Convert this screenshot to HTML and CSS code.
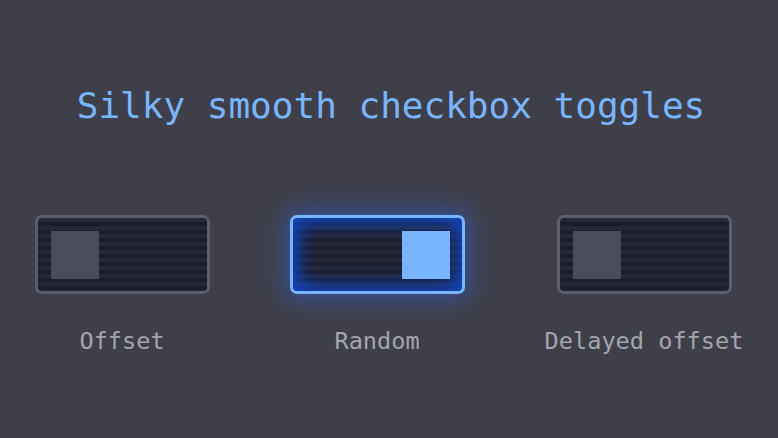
FILE: index.html
```html
<!DOCTYPE html>
<html lang="en">
<head>
  <meta charset="UTF-8" />
  <meta name="viewport" content="width=device-width, initial-scale=1.0" />
  <title>Silky smooth checkbox toggles</title>
  <link rel="stylesheet" href="styles.css">
</head>
<body>
  <h1 class="title">Silky smooth checkbox toggles</h1>
  <div class="toggle-row">
    <label class="toggle-item">
      <input type="checkbox" class="toggle-input" />
      <span class="toggle"><span class="knob"></span></span>
      <span class="toggle-label">Offset</span>
    </label>
    <label class="toggle-item">
      <input type="checkbox" class="toggle-input" checked />
      <span class="toggle"><span class="knob"></span></span>
      <span class="toggle-label">Random</span>
    </label>
    <label class="toggle-item">
      <input type="checkbox" class="toggle-input" />
      <span class="toggle"><span class="knob"></span></span>
      <span class="toggle-label">Delayed offset</span>
    </label>
  </div>
</body>
</html>
```
FILE: styles.css
```css
body {
  margin: 0;
  background-color: #3f3f4a;
  font-family: "DejaVu Sans Mono", "Liberation Mono", monospace;
  display: flex;
  flex-direction: column;
  align-items: center;
  height: 100vh;
  overflow: hidden;
}
.title {
  margin: 84px 0 0 4px;
  font-size: 36px;
  font-weight: normal;
  line-height: 44px;
  color: #79b5ff;
}
.toggle-row {
  display: flex;
  gap: 80px;
  margin-top: 87px;
}
.toggle-item {
  display: flex;
  flex-direction: column;
  align-items: center;
  cursor: pointer;
}
.toggle-input {
  display: none;
}
.toggle {
  display: flex;
  box-sizing: border-box;
  width: 175px;
  height: 79px;
  padding: 13px 12px 12px 13px;
  border: 3px solid #5c5e6e;
  border-radius: 7px;
  /* striped track */
  background: repeating-linear-gradient(
    to bottom,
    #252839 0,
    #252839 4px,
    #1b1d2b 4px,
    #1b1d2b 8px
  );
}
.knob {
  width: 48px;
  height: 48px;
  background: #4a4c5a;
  transition: transform 0.3s;
}
.toggle-input:checked + .toggle {
  border-color: #79b5ff;
  box-shadow: 0 0 24px 5px rgba(40, 110, 255, 0.42), inset 0 0 18px 6px #0f46c4;
}
.toggle-input:checked + .toggle .knob {
  background: #79b5ff;
  transform: translateX(96px);
}
.toggle-label {
  margin-top: 33px;
  font-size: 23.6px;
  line-height: 28px;
  color: #a4a4af;
}
```
